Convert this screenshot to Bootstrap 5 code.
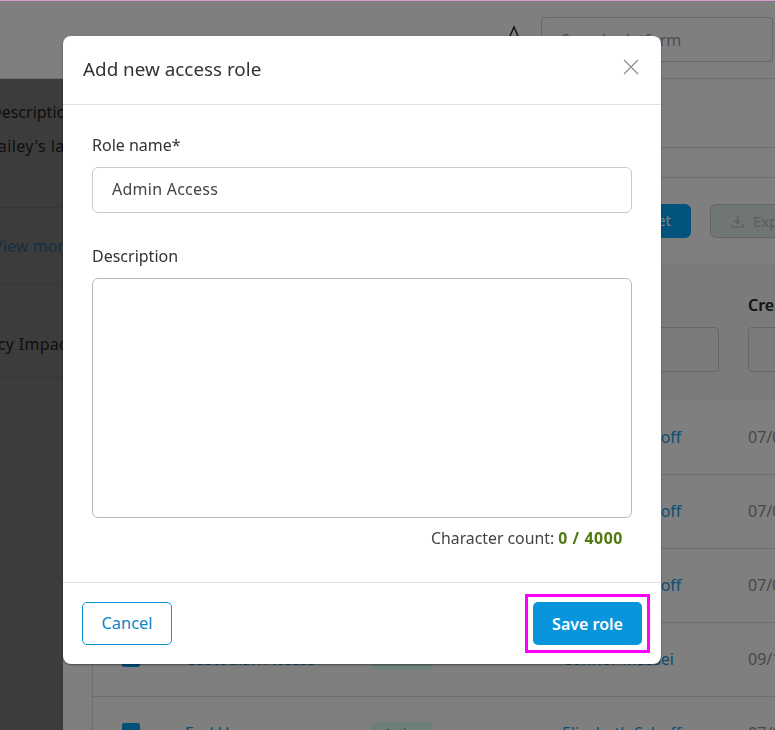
<!DOCTYPE html>
<html lang="en">
<head>
<meta charset="utf-8">
<title>Add new access role</title>
<link href="https://cdn.jsdelivr.net/npm/bootstrap@5.3.0/dist/css/bootstrap.min.css" rel="stylesheet">
<style>
html,body{height:730px;overflow:hidden}
body{font-family:"Noto Sans","Open Sans",sans-serif;color:#333;background:#fff}
.shell{width:1100px;height:730px;border-top:1px solid #d89bd2}
.topbar{height:78px;background:#fff;border-bottom:1px solid #ddd;padding-left:504px;gap:17px}
.searchbox{width:232px;height:45px;border:1px solid #ccc;border-radius:4px;color:#999;padding:10px 19px;margin-top:16px;font-size:16px;white-space:nowrap}
.bell{margin-top:24px;flex:none}
.leftpane{width:63px;height:651px;background:#787878;overflow:hidden;flex:none;color:#1c1c1c;font-size:16px}
.leftinner{width:240px}
.l1{height:129px;padding-top:21px}
.l2{height:77px;padding-top:26px;color:#265f85}
.l3{height:93px;padding-top:47px}
.t-desc{margin-left:-10px}
.t-bailey{margin-left:-13px;margin-top:10px;letter-spacing:.4px}
.t-view{margin-left:-7px;letter-spacing:.1px}
.t-impact{margin-left:-31px;letter-spacing:.3px}
.rowline{border-bottom:1px solid #6c6c6c}
.mainpane{width:1000px}
.tabsband{height:69px;border-bottom:1px solid #ddd}
.subband{height:116px}
.subtabs{height:30px;border-bottom:1px solid #ddd}
.actionsrow{padding-left:568px;padding-top:26px;gap:19px}
.tbtn{height:34px;border-radius:6px;font-size:15px;line-height:33px;white-space:nowrap}
.tbtn-blue{width:60px;background:#04a8f8;padding-right:20px}
.tbtn-grey{width:120px;border:1px solid #ccc;background:#e0eaea;color:#bbb;padding-left:20px;gap:9px}
.filterband{height:137px;background:#f6f6f6}
.filtercols{padding-left:529px;padding-top:29px;gap:29px;font-weight:600;font-size:16px;color:#222}
.fbox{height:45px;border:1px solid #ccc;border-radius:4px;margin-top:10px}
.colA{width:127px}.colB{width:100px}
.rowsbox{margin-left:29px;border-left:1px solid #ddd}
.drow{height:74px;border-bottom:1px solid #ddd;font-size:16px}
.chk{width:18px;height:18px;background:#04a0ee;margin-left:29px;margin-bottom:3px;border-radius:2px;flex:none}
.cname{width:187px;margin-left:45px;margin-bottom:2px;color:#17a0e0;flex:none}
.cstat{width:190px;flex:none;margin-bottom:4px}
.pill{display:inline-block;width:60px;height:22px;line-height:22px;text-align:center;font-size:13px;background:#dcfdf0;color:#1f9a6c;border-radius:4px}
.cown{width:186px;color:#17a0e0;flex:none;margin-bottom:2px}
.cdate{color:#909090;margin-bottom:2px}
.modal-backdrop.pagedim{opacity:1;background:rgba(0,0,0,.5);z-index:5;top:1px;height:729px}
.modal.dlg{display:block;z-index:6;overflow:hidden}
.modal-dialog.dlgbox{width:598px;max-width:598px;margin:36px 0 0 63px}
.dlgbox .modal-content{height:628px;border:0;border-radius:8px;box-shadow:0 1px 2px rgba(0,0,0,.45)}
.dlgbox .modal-header{height:69px;padding:0 20px;border-bottom:1px solid #dee2e6;align-items:center}
.dlgbox .modal-title{font-size:18.85px;font-weight:400;color:#333;margin-top:-2px}
.xbtn{color:#8a8f94;background:none;border:0;padding:0;line-height:0;margin-top:-6px;margin-right:2px}
.dlgbox .modal-body{padding:28px 29px 0 29px;height:477px;flex:none}
.flabel{font-size:16px;color:#333;margin-bottom:10px;line-height:24px}
.finput{height:46px;border:1px solid #ccc;border-radius:6px;padding:0 19px 2px;font-size:16px;color:#444;letter-spacing:.25px}
.farea{height:240px;border:1px solid #bbb;border-radius:6px;resize:none}
.block-gap{height:31px}
.ccount{font-size:15.8px;color:#444;text-align:right;margin-top:9px;padding-right:9px}
.ccount b{color:#4f7a0f;font-weight:700;letter-spacing:.6px}
.dlgbox .modal-footer{height:82px;padding:0 19px;border-top:1px solid #dee2e6;justify-content:space-between}
.btn-cancel{width:90px;height:43px;border:1px solid #0995db;color:#0a86c8;background:#fff;border-radius:5px;font-size:16.4px;padding:0;margin:0}
.savewrap{border:3px solid #f0f;padding:5px;margin:0 -8px 0 0;line-height:0}
.btn-save{width:109px;height:43px;background:#0995db;color:#fff;border:0;border-radius:5px;font-size:16px;font-weight:600;padding:0}
</style>
</head>
<body>
<div class="shell">
  <div class="topbar d-flex">
    <svg class="bell" width="20" height="20" viewBox="0 0 20 20" fill="none" stroke="#333" stroke-width="1.6"><path d="M10 2 3 18h14Z"/></svg>
    <div class="searchbox">Search platform</div>
  </div>
  <div class="d-flex">
    <div class="leftpane">
      <div class="leftinner">
        <div class="rowline l1"><div class="t-desc">Description</div><div class="t-bailey">Bailey's latest</div></div>
        <div class="rowline l2"><div class="t-view">View more</div></div>
        <div class="rowline l3"><div class="t-impact">Policy Impact</div></div>
      </div>
    </div>
    <div class="mainpane">
      <div class="tabsband"></div>
      <div class="subband">
        <div class="subtabs"></div>
        <div class="actionsrow d-flex">
          <div class="tbtn tbtn-blue text-white text-end">et</div>
          <div class="tbtn tbtn-grey d-flex align-items-center">
            <svg width="13" height="13" viewBox="0 0 13 13" fill="none" stroke="#bbb" stroke-width="1.2"><path d="M6.5 1v7M3.7 5.5l2.8 2.8 2.8-2.8M1 9v3h11V9"/></svg>
            <span>Export</span>
          </div>
        </div>
      </div>
      <div class="filterband">
        <div class="filtercols d-flex"><div class="colA"><div>&nbsp;</div><div class="fbox"></div></div><div class="colB"><div>Created</div><div class="fbox"></div></div></div>
      </div>
      <div class="rowsbox">
        <div class="drow d-flex align-items-center"><div class="chk"></div><div class="cname">Admin</div><div class="cstat"><span class="pill">Active</span></div><div class="cown">Elizabeth Schoff</div><div class="cdate">07/01/2023</div></div>
        <div class="drow d-flex align-items-center"><div class="chk"></div><div class="cname">Auditor</div><div class="cstat"><span class="pill">Active</span></div><div class="cown">Elizabeth Schoff</div><div class="cdate">07/01/2023</div></div>
        <div class="drow d-flex align-items-center"><div class="chk"></div><div class="cname">Analyst</div><div class="cstat"><span class="pill">Active</span></div><div class="cown">Elizabeth Schoff</div><div class="cdate">07/01/2023</div></div>
        <div class="drow d-flex align-items-center"><div class="chk"></div><div class="cname">Custodian Access</div><div class="cstat"><span class="pill">Active</span></div><div class="cown">Connor Massei</div><div class="cdate">09/12/2023</div></div>
        <div class="drow d-flex align-items-center"><div class="chk"></div><div class="cname">End User</div><div class="cstat"><span class="pill">Active</span></div><div class="cown">Elizabeth Schoff</div><div class="cdate">07/01/2023</div></div>
      </div>
    </div>
  </div>
</div>
<div class="modal-backdrop pagedim"></div>
<div class="modal dlg" role="dialog">
  <div class="modal-dialog dlgbox">
    <div class="modal-content">
      <div class="modal-header">
        <h5 class="modal-title">Add new access role</h5>
        <button class="xbtn ms-auto" type="button" aria-label="Close"><svg width="16" height="16" viewBox="0 0 16 16" fill="none" stroke="currentColor" stroke-width="1.3"><path d="M1 1l14 14M15 1 1 15"/></svg></button>
      </div>
      <div class="modal-body">
        <label class="flabel d-block">Role name*</label>
        <input class="form-control finput" value="Admin Access">
        <div class="block-gap"></div>
        <label class="flabel d-block">Description</label>
        <textarea class="form-control farea"></textarea>
        <div class="ccount">Character count: <b>0 / 4000</b></div>
      </div>
      <div class="modal-footer">
        <button class="btn btn-cancel" type="button">Cancel</button>
        <div class="savewrap"><button class="btn btn-save" type="button">Save role</button></div>
      </div>
    </div>
  </div>
</div>
</body>
</html>
